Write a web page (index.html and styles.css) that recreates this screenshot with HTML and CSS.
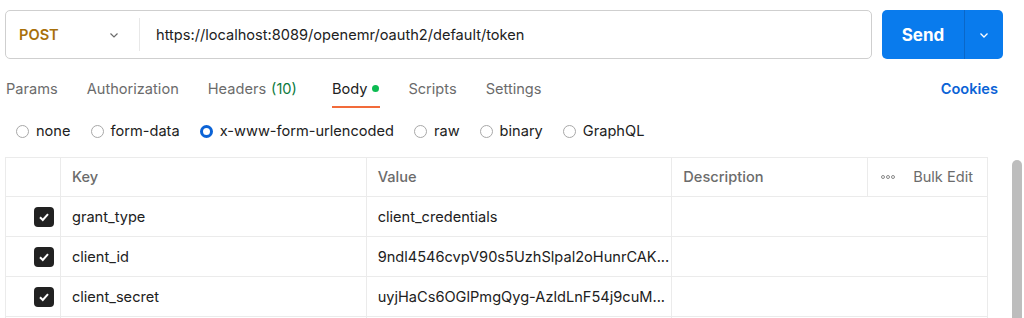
FILE: index.html
```html
<!DOCTYPE html>
<html>
<head>
<meta charset="utf-8">
<link rel="stylesheet" href="styles.css">
</head>
<body>
<div class="page">
  <div class="reqbar">
    <div class="urlbox">
      <div class="method">
        <span class="method-name">POST</span>
        <svg class="chev" width="12" height="12" viewBox="0 0 12 12"><path d="M2.5 4.5 L6 8 L9.5 4.5" fill="none" stroke="#6b6b6b" stroke-width="1.2"/></svg>
      </div>
      <div class="url">https://localhost:8089/openemr/oauth2/default/token</div>
    </div>
    <div class="send">
      <span class="send-label">Send</span>
      <span class="send-chev"><svg width="12" height="12" viewBox="0 0 12 12"><path d="M2.5 4.5 L6 8 L9.5 4.5" fill="none" stroke="#fff" stroke-width="1.3"/></svg></span>
    </div>
  </div>

  <div class="tabs">
    <div class="tablist">
      <span class="tab">Params</span>
      <span class="tab">Authorization</span>
      <span class="tab">Headers <span class="count">(10)</span></span>
      <span class="tab active">Body <span class="dot"></span></span>
      <span class="tab">Scripts</span>
      <span class="tab">Settings</span>
    </div>
    <span class="cookies">Cookies</span>
  </div>

  <div class="radios">
    <label class="radio"><span class="circle"></span>none</label>
    <label class="radio"><span class="circle"></span>form-data</label>
    <label class="radio"><span class="circle on"></span>x-www-form-urlencoded</label>
    <label class="radio"><span class="circle"></span>raw</label>
    <label class="radio"><span class="circle"></span>binary</label>
    <label class="radio"><span class="circle"></span>GraphQL</label>
  </div>

  <div class="table">
    <div class="row head">
      <div class="cell chk"></div>
      <div class="cell key">Key</div>
      <div class="cell val">Value</div>
      <div class="cell desc">Description</div>
      <div class="cell bulk"><span class="dots"><i></i><i></i><i></i></span>Bulk Edit</div>
    </div>
    <div class="row">
      <div class="cell chk"><span class="cb"><svg width="14" height="14" viewBox="0 0 14 14"><path d="M3 7.2 L5.8 10 L11 4.2" fill="none" stroke="#fff" stroke-width="2"/></svg></span></div>
      <div class="cell key">grant_type</div>
      <div class="cell val">client_credentials</div>
      <div class="cell descwide"></div>
    </div>
    <div class="row">
      <div class="cell chk"><span class="cb"><svg width="14" height="14" viewBox="0 0 14 14"><path d="M3 7.2 L5.8 10 L11 4.2" fill="none" stroke="#fff" stroke-width="2"/></svg></span></div>
      <div class="cell key">client_id</div>
      <div class="cell val">9ndl4546cvpV90s5UzhSlpal2oHunrCAK...</div>
      <div class="cell descwide"></div>
    </div>
    <div class="row">
      <div class="cell chk"><span class="cb"><svg width="14" height="14" viewBox="0 0 14 14"><path d="M3 7.2 L5.8 10 L11 4.2" fill="none" stroke="#fff" stroke-width="2"/></svg></span></div>
      <div class="cell key">client_secret</div>
      <div class="cell val">uyjHaCs6OGlPmgQyg-AzldLnF54j9cuM...</div>
      <div class="cell descwide"></div>
    </div>
    <div class="row">
      <div class="cell chk"></div>
      <div class="cell key"></div>
      <div class="cell val"></div>
      <div class="cell descwide"></div>
    </div>
  </div>
  <div class="scrollbar"></div>
</div>
</body>
</html>
```

FILE: styles.css
```css
* { box-sizing: border-box; }
html, body { margin: 0; padding: 0; background: #fff; overflow: hidden; }
body { font-family: Inter, "Noto Sans", sans-serif; color: #212121; font-size: 14.6px; }
.page { position: relative; width: 1024px; height: 318px; overflow: hidden; padding: 10px 0 0 5px; }

.reqbar { display: flex; gap: 10px; height: 49px; width: 998px; }
.urlbox { flex: 0 0 867px; display: flex; align-items: center; border: 1px solid #cfcfcf; border-radius: 5px; }
.method { width: 134px; display: flex; align-items: center; justify-content: space-between; padding: 0 19px 0 13px; height: 33px; border-right: 1px solid #e8e8e8; }
.method-name { color: #a8700a; font-weight: 600; font-size: 14.6px; }
.chev { display: block; }
.url { padding-left: 16px; font-size: 14.6px; color: #212121; }

.send { flex: 0 0 121px; display: flex; background: #097bed; border-radius: 5px; color: #fff; }
.send-label { flex: 1; display: flex; align-items: center; justify-content: center; font-weight: 700; font-size: 17px; border-right: 1px solid #0a67c8; }
.send-chev { width: 38px; display: flex; align-items: center; justify-content: center; }

.tabs { display: flex; justify-content: space-between; align-items: flex-start; width: 993px; height: 50px; padding-top: 21px; padding-left: 1px; }
.tablist { display: flex; gap: 29px; }
.tab { color: #6b6b6b; font-size: 14.6px; line-height: 18px; position: relative; display: flex; align-items: center; gap: 5px; }
.count { color: #0b7a3e; }
.tab.active { color: #212121; margin-left: 6px; }
.tab.active::after { content: ""; position: absolute; left: 0; right: -1px; top: 26px; height: 2px; background: #f26b3a; }
.dot { width: 7px; height: 7px; border-radius: 50%; background: #0cbb52; display: inline-block; margin-top: -2px; }
.cookies { color: #0b63d6; font-weight: 600; font-size: 14.6px; line-height: 18px; }

.radios { display: flex; gap: 20px; height: 48px; padding-left: 11px; padding-top: 12px; }
.radio { display: flex; align-items: center; gap: 7px; font-size: 14.6px; line-height: 20px; height: 20px; color: #212121; }
.circle { width: 13px; height: 13px; border-radius: 50%; border: 1px solid #a8a8a8; display: inline-block; }
.circle.on { border: 3.5px solid #0b63d6; }

.table { width: 983px; border-top: 1px solid #ebebeb; border-left: 1px solid #ebebeb; }
.row { display: flex; height: 40px; border-bottom: 1px solid #ebebeb; }
.row.head { height: 39px; }
.cell { border-right: 1px solid #ebebeb; display: flex; align-items: center; font-size: 14.6px; color: #212121; white-space: nowrap; overflow: hidden; }
.chk { width: 55px; justify-content: flex-end; padding-right: 6px; }
.key { width: 306px; padding-left: 11px; }
.val { width: 306px; padding-left: 11px; }
.desc { width: 196px; padding-left: 11px; }
.bulk { width: 120px; padding-left: 13px; color: #6b6b6b; }
.descwide { width: 316px; }
.head .cell { color: #6b6b6b; font-weight: 500; padding-bottom: 1px; }
.head .bulk { font-weight: 400; }
.dots { display: inline-flex; gap: 1px; margin-right: 18px; }
.dots i { width: 4px; height: 4px; border: 1px solid #8a8a8a; border-radius: 50%; display: block; }
.cb { width: 20px; height: 20px; background: #212121; border-radius: 4px; display: flex; align-items: center; justify-content: center; }

.scrollbar { position: absolute; left: 1012px; top: 160px; width: 10px; height: 170px; background: #bdbdbd; border-radius: 5px; }
```
